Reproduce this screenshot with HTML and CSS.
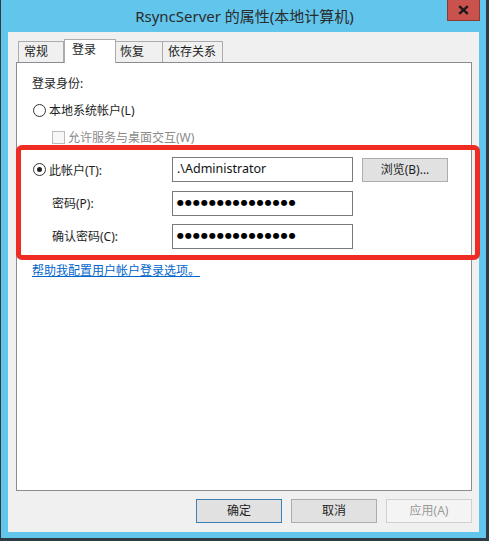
FILE: index.html
```html
<!DOCTYPE html>
<html lang="zh-CN">
<head>
<meta charset="utf-8">
<title>RsyncServer 的属性(本地计算机)</title>
<link rel="stylesheet" href="styles.css">
</head>
<body>
<div class="window">
  <div class="titlebar">
    <div class="title">RsyncServer 的属性(本地计算机)</div>
    <div class="close">
      <svg width="11" height="10" viewBox="0 0 11 10"><path d="M1.2 1.2 L9.8 8.8 M9.8 1.2 L1.2 8.8" stroke="#1a1a1a" stroke-width="2.4" fill="none"/></svg>
    </div>
  </div>
  <div class="client">
    <div class="tabs">
      <div class="tab t1">常规</div>
      <div class="tab t2 active">登录</div>
      <div class="tab t3">恢复</div>
      <div class="tab t4">依存关系</div>
    </div>
    <div class="panel">
      <div class="row heading">登录身份:</div>
      <div class="row opt"><span class="radio"></span><span>本地系统帐户(L)</span></div>
      <div class="row sub disabled"><span class="check"></span><span>允许服务与桌面交互(W)</span></div>
      <div class="acct">
        <div class="opt"><span class="radio on"></span><span>此帐户(T):</span></div>
        <div class="field">.\Administrator</div>
        <div class="btn browse">浏览(B)...</div>
        <div class="lbl">密码(P):</div>
        <div class="field pw">●●●●●●●●●●●●●●●</div>
        <div></div>
        <div class="lbl">确认密码(C):</div>
        <div class="field pw">●●●●●●●●●●●●●●●</div>
      </div>
      <a class="link" href="#">帮助我配置用户帐户登录选项。</a>
    </div>
    <div class="buttons">
      <div class="btn default">确定</div>
      <div class="btn">取消</div>
      <div class="btn off">应用(A)</div>
    </div>
  </div>
</div>
<div class="highlight"></div>
</body>
</html>
```
FILE: styles.css
```css
html, body {
  margin: 0;
  padding: 0;
}
body {
  width: 489px;
  height: 541px;
  background: #2e3b45;
  position: relative;
  overflow: hidden;
  font-family: "Noto Sans", "Noto Sans CJK SC", sans-serif;
  font-size: 12px;
  color: #1e1e1e;
}
.window {
  margin-left: 1px;
  width: 485px;
  height: 538px;
  box-sizing: border-box;
  background: #62c5ec;
  padding: 0 7px 6px 7px;
  display: flex;
  flex-direction: column;
}
.titlebar {
  height: 32px;
  position: relative;
  display: flex;
  justify-content: center;
  align-items: center;
}
.title {
  font-size: 15px;
  color: #2b2b2b;
  line-height: 20px;
  margin-top: -1px;
  margin-left: 2px;
}
.close {
  position: absolute;
  right: -1px;
  top: 0;
  width: 33px;
  height: 21px;
  box-sizing: border-box;
  background: #c9534c;
  border: 1px solid #8c3a36;
  border-top: none;
  display: flex;
  align-items: center;
  justify-content: center;
}
.client {
  background: #f0f0f0;
  height: 500px;
  box-sizing: border-box;
  padding: 7px 7px 0 8px;
  display: flex;
  flex-direction: column;
}
.tabs {
  height: 23px;
  display: flex;
  align-items: flex-end;
  padding-left: 2px;
}
.tab {
  box-sizing: border-box;
  height: 21px;
  border: 1px solid #acacac;
  border-bottom: none;
  background: #f0f0f0;
  line-height: 20px;
  padding-left: 5px;
  white-space: nowrap;
}
.t1 { width: 46px; }
.t2 { width: 52px; }
.t3 { width: 47px; border-left: none; padding-left: 4px; }
.t4 { width: 60px; border-left: none; }
.tab.active {
  height: 24px;
  margin-bottom: -1px;
  background: #ffffff;
  position: relative;
  z-index: 1;
  padding-left: 7px;
  line-height: 20px;
}
.panel {
  height: 429px;
  box-sizing: border-box;
  background: #ffffff;
  border: 1px solid #898c91;
  padding-left: 15px;
  display: flex;
  flex-direction: column;
  align-items: flex-start;
}
.row {
  height: 20px;
  display: flex;
  align-items: center;
  white-space: nowrap;
}
.heading { margin-top: 10px; }
.row.opt { margin-top: 7px; }
.row.sub { margin-top: 7px; margin-left: 20px; }
.opt {
  display: flex;
  align-items: center;
  white-space: nowrap;
}
.radio {
  width: 13px;
  height: 13px;
  box-sizing: border-box;
  border: 1px solid #333333;
  border-radius: 50%;
  background: #ffffff;
  margin-left: 1px;
  margin-right: 3px;
  display: flex;
  align-items: center;
  justify-content: center;
}
.radio.on::after {
  content: "";
  width: 5px;
  height: 5px;
  border-radius: 50%;
  background: #222222;
}
.check {
  width: 13px;
  height: 13px;
  box-sizing: border-box;
  border: 1px solid #bcbcbc;
  background: #f7f7f7;
  margin-right: 3px;
}
.disabled { color: #8a8a8a; }
.acct {
  margin-top: 10px;
  display: grid;
  grid-template-columns: 131px 181px 86px;
  grid-template-rows: 26px 25px 25px;
  row-gap: 8px;
  column-gap: 9px;
  align-items: start;
}
.acct .opt { height: 25px; }
.lbl {
  height: 25px;
  line-height: 25px;
  padding-left: 20px;
  white-space: nowrap;
}
.field {
  height: 25px;
  box-sizing: border-box;
  border: 1px solid #7a7a7a;
  background: #ffffff;
  padding-left: 4px;
  line-height: 22px;
  font-size: 12.5px;
  color: #111;
}
.field.pw {
  font-family: "DejaVu Sans", sans-serif;
  font-size: 8px;
  letter-spacing: 1px;
  line-height: 21px;
  color: #000;
}
.btn {
  box-sizing: border-box;
  height: 24px;
  background: #e1e1e1;
  border: 1px solid #adadad;
  text-align: center;
  line-height: 22px;
  color: #1e1e1e;
}
.browse { margin-top: 1px; }
.link {
  margin-top: 13px;
  color: #0066cc;
  text-decoration: underline;
  line-height: 17px;
  white-space: nowrap;
}
.buttons {
  margin-top: 8px;
  display: flex;
  justify-content: flex-end;
  gap: 9px;
}
.buttons .btn { width: 86px; }
.btn.default { border-color: #3c7fb1; }
.btn.off {
  background: #f4f4f4;
  border-color: #d0d0d0;
  color: #9a9a9a;
}
.highlight {
  position: absolute;
  left: 16px;
  top: 145px;
  width: 464px;
  height: 115px;
  box-sizing: border-box;
  border: 5px solid #ef2b23;
  border-radius: 6px;
  pointer-events: none;
}
```
